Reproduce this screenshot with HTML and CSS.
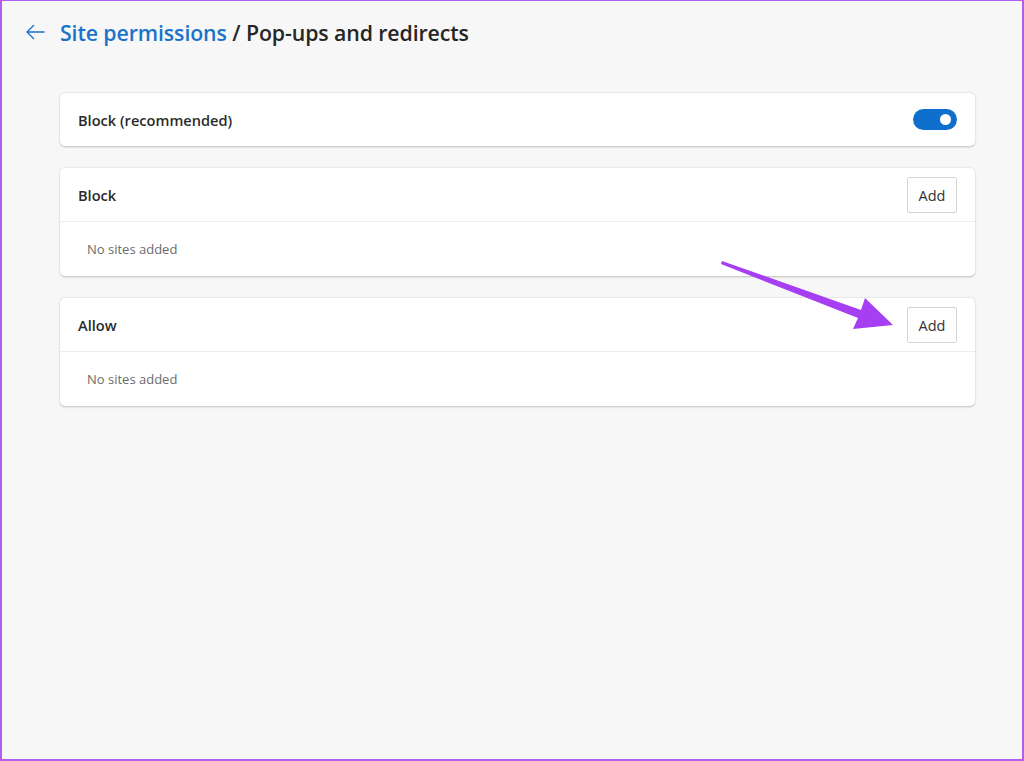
FILE: index.html
```html
<!DOCTYPE html>
<html lang="en">
<head>
<meta charset="utf-8">
<title>Pop-ups and redirects</title>
<link rel="stylesheet" href="styles.css">
</head>
<body>
<div class="frame">
  <header class="header">
    <button class="back" aria-label="Back">
      <svg width="20" height="16" viewBox="0 0 20 16"><path d="M19 8H2M8.5 1.5L2 8l6.5 6.5" fill="none" stroke="#1a73c8" stroke-width="1.4" stroke-linecap="round" stroke-linejoin="round"/></svg>
    </button>
    <h1 class="title"><span class="crumb">Site permissions</span> / Pop-ups and redirects</h1>
  </header>
  <main class="content">
    <section class="card">
      <div class="row">
        <span class="label">Block (recommended)</span>
        <span class="toggle"><span class="knob"></span></span>
      </div>
    </section>
    <section class="card">
      <div class="row row-head">
        <span class="label">Block</span>
        <button class="add">Add</button>
      </div>
      <div class="row-empty">No sites added</div>
    </section>
    <section class="card">
      <div class="row row-head">
        <span class="label">Allow</span>
        <button class="add">Add</button>
      </div>
      <div class="row-empty">No sites added</div>
    </section>
  </main>
  <svg class="annot" width="1024" height="761" viewBox="0 0 1024 761">
    <polygon points="722,261 861,310 865,298 893,325 853,329 858,318 721,264" fill="#a63ff2"/>
  </svg>
</div>
</body>
</html>
```
FILE: styles.css
```css
* { box-sizing: border-box; }
html, body { margin: 0; padding: 0; }
body {
  font-family: "Open Sans", "Noto Sans", sans-serif;
  color: #262626;
}
.frame {
  position: relative;
  width: 1024px;
  height: 761px;
  border: 2px solid #b45ef0;
  border-top-width: 1px;
  background: #f7f7f7;
  padding: 16px 47px 0 23px;
}
.header {
  display: flex;
  align-items: center;
  height: 30px;
}
.back {
  width: 20px;
  height: 16px;
  padding: 0;
  border: 0;
  background: none;
  display: flex;
  margin-right: 15px;
}
.title {
  margin: 0;
  font-size: 21.3px;
  font-weight: 600;
  color: #262626;
  letter-spacing: -0.1px;
}
.crumb { color: #1a73c8; }
.content {
  margin-top: 46px;
  margin-left: 35px;
  display: flex;
  flex-direction: column;
  gap: 22px;
}
.card {
  background: #fff;
  border-radius: 5px;
  box-shadow: 0 0.5px 2px rgba(0,0,0,0.18), 0 1px 3px rgba(0,0,0,0.06);
}
.row {
  display: flex;
  align-items: center;
  justify-content: space-between;
  height: 53px;
  padding: 0 18px;
}
.row-head {
  height: 54px;
  padding-top: 1px;
  border-bottom: 1px solid #ededed;
}
.label {
  font-size: 14.6px;
  font-weight: 600;
  color: #2b2b2b;
}
.toggle {
  width: 44px;
  height: 21px;
  border-radius: 11px;
  background: #0f6fcc;
  position: relative;
}
.knob {
  position: absolute;
  right: 6px;
  top: 5px;
  width: 11px;
  height: 11px;
  border-radius: 50%;
  background: #fff;
}
.add {
  width: 50px;
  height: 36px;
  border: 1px solid #d4d4d4;
  border-radius: 2px;
  background: #fff;
  font-family: inherit;
  font-size: 14.5px;
  color: #333;
  padding: 0;
}
.row-empty {
  height: 54px;
  display: flex;
  align-items: center;
  padding-left: 27px;
  font-size: 13px;
  color: #6b6b6b;
}
.annot {
  position: absolute;
  left: -2px;
  top: -1px;
  pointer-events: none;
}
```
